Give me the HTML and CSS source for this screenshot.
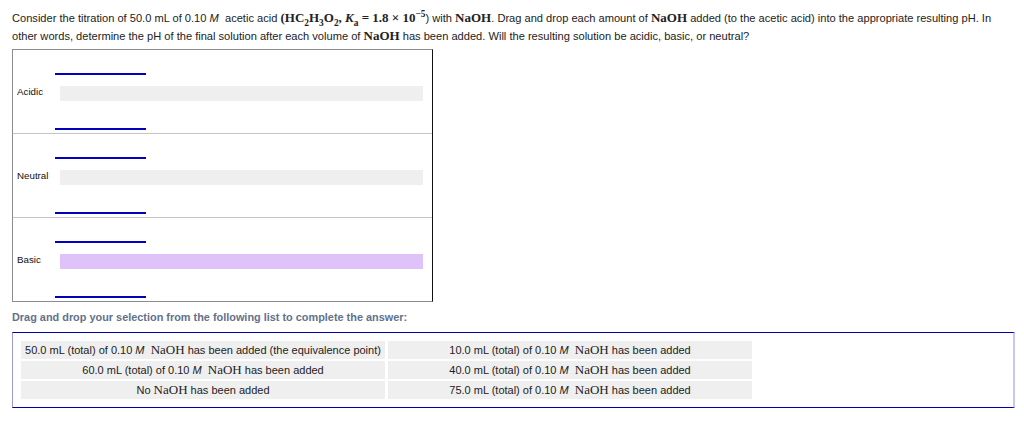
FILE: index.html
```html
<!DOCTYPE html>
<html lang="en">
<head>
<meta charset="utf-8">
<title>Titration of acetic acid</title>
<link rel="stylesheet" href="styles.css">
</head>
<body>
<div class="page">
  <p class="prompt">Consider the titration of 50.0 mL of 0.10 <i>M</i>&nbsp; acetic acid <span class="mx mb">(HC<sub>2</sub>H<sub>3</sub>O<sub>2</sub>, <i>K</i><sub>a</sub> = 1.8 × 10<sup>−5</sup></span>) with <span class="mx mb">NaOH</span>. Drag and drop each amount of <span class="mx mb">NaOH</span> added (to the acetic acid) into the appropriate resulting pH. In other words, determine the pH of the final solution after each volume of <span class="mx mb">NaOH</span> has been added. Will the resulting solution be acidic, basic, or neutral?</p>

  <div class="targets">
    <div class="target">
      <div class="target-label">Acidic</div>
      <div class="target-zone">
        <div class="blank"></div>
        <div class="slot"></div>
        <div class="blank"></div>
      </div>
    </div>
    <div class="target">
      <div class="target-label">Neutral</div>
      <div class="target-zone">
        <div class="blank"></div>
        <div class="slot"></div>
        <div class="blank"></div>
      </div>
    </div>
    <div class="target">
      <div class="target-label">Basic</div>
      <div class="target-zone">
        <div class="blank"></div>
        <div class="slot slot-active"></div>
        <div class="blank"></div>
      </div>
    </div>
  </div>

  <h2 class="pool-title">Drag and drop your selection from the following list to complete the answer:</h2>

  <div class="pool">
    <div class="chip">50.0 mL (total) of 0.10 <i>M</i>&nbsp; <span class="mx">NaOH</span> has been added (the equivalence point)</div>
    <div class="chip">10.0 mL (total) of 0.10 <i>M</i>&nbsp; <span class="mx">NaOH</span> has been added</div>
    <div class="chip">60.0 mL (total) of 0.10 <i>M</i>&nbsp; <span class="mx">NaOH</span> has been added</div>
    <div class="chip">40.0 mL (total) of 0.10 <i>M</i>&nbsp; <span class="mx">NaOH</span> has been added</div>
    <div class="chip">No <span class="mx">NaOH</span> has been added</div>
    <div class="chip">75.0 mL (total) of 0.10 <i>M</i>&nbsp; <span class="mx">NaOH</span> has been added</div>
  </div>
</div>
</body>
</html>
```

FILE: styles.css
```css
html, body {
  margin: 0;
  padding: 0;
  background: #fff;
}

body {
  font-family: "Liberation Sans", Arial, sans-serif;
  font-size: 11px;
  color: #222;
}

.page {
  padding: 9px 12px 0 12px;
}

/* question text */
.prompt {
  margin: 0;
  width: 1004px;
  line-height: 18px;
  font-size: 11.1px;
}

.mx {
  font-family: "Liberation Serif", "Times New Roman", serif;
  font-size: 13px;
  line-height: 1;
}

.mb {
  font-weight: bold;
}

.mx sub,
.mx sup {
  font-size: 72%;
  line-height: 0;
}

/* drop targets */
.targets {
  margin-top: 4px;
  width: 419px;
  border: 1px solid #8c8c8c;
  border-right-color: #111;
}

.target {
  display: flex;
  align-items: center;
  height: 83px;
  border-bottom: 1px solid #c4c4c4;
}

.target:last-child {
  border-bottom: 0;
}

.target-label {
  width: 38px;
  padding-left: 4px;
  color: #111;
  font-size: 9.75px;
}

.target-zone {
  flex: 1;
  display: flex;
  flex-direction: column;
  padding-top: 23px;
  height: 83px;
  box-sizing: border-box;
}

.blank {
  width: 91px;
  height: 2px;
  background: #0000bd;
}

.slot {
  height: 15px;
  margin: 11px 9px 27px 5px;
  background: #efefef;
}

.slot-active {
  background: #e0c2fa;
}

/* answer pool */
.pool-title {
  margin: 8px 0 0 0;
  font-size: 10.9px;
  line-height: 14px;
  font-weight: bold;
  color: #62728a;
}

.pool {
  margin-top: 8px;
  width: 992px;
  border-top: 1px solid #0000aa;
  border-bottom: 1px solid #0000aa;
  border-left: 1px solid #9a9ad8;
  border-right: 2px solid #c8c8f0;
  padding: 8px 0 8px 8px;
  display: grid;
  grid-template-columns: 364px 364px;
  column-gap: 3px;
  row-gap: 2px;
}

.chip {
  height: 18px;
  background: #efefef;
  color: #222;
  font-size: 11px;
  line-height: 18px;
  text-align: center;
  white-space: nowrap;
}
```
